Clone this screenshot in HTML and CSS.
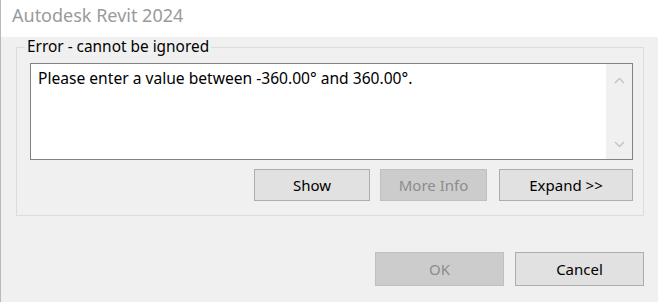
FILE: index.html
```html
<!DOCTYPE html>
<html>
<head>
<meta charset="utf-8">
<link rel="stylesheet" href="styles.css">
</head>
<body>
<div class="window">
  <div class="titlebar">Autodesk Revit 2024</div>
  <div class="content">
    <fieldset class="group">
      <legend class="legend">Error - cannot be ignored</legend>
      <div class="textbox">
        <div class="message">Please enter a value between -360.00° and 360.00°.</div>
        <div class="scrollbar">
          <svg class="chev" width="11" height="7" viewBox="0 0 11 7"><path d="M1 6 L5.5 1.5 L10 6" fill="none" stroke="#c2c2c2" stroke-width="1.3"/></svg>
          <svg class="chev" width="11" height="7" viewBox="0 0 11 7"><path d="M1 1 L5.5 5.5 L10 1" fill="none" stroke="#c2c2c2" stroke-width="1.3"/></svg>
        </div>
      </div>
      <div class="row group-buttons">
        <button class="btn btn-show">Show</button>
        <button class="btn btn-more disabled">More Info</button>
        <button class="btn btn-expand">Expand &gt;&gt;</button>
      </div>
    </fieldset>
    <div class="row dialog-buttons">
      <button class="btn btn-dlg disabled">OK</button>
      <button class="btn btn-dlg">Cancel</button>
    </div>
  </div>
</div>
</body>
</html>
```

FILE: styles.css
```css
html, body {
  margin: 0;
  padding: 0;
}
body {
  width: 658px;
  height: 302px;
  overflow: hidden;
  background: #f0f0f0;
  font-family: "Noto Sans", "Open Sans", sans-serif;
  font-size: 14px;
  color: #000;
}
.window {
  height: 302px;
  border-left: 1px solid #b9b9b9;
  box-sizing: border-box;
  display: flex;
  flex-direction: column;
}
.titlebar {
  height: 37px;
  background: #fff;
  color: #9a9a9a;
  font-size: 18px;
  line-height: 30px;
  padding-left: 11px;
  box-sizing: border-box;
}
.content {
  padding: 0 14px 0 15px;
}
.group {
  margin: 0;
  border: 1px solid #dcdcdc;
  padding: 6px 10px 14px 13px;
  min-width: 0;
}
.legend {
  padding: 0 2px;
  margin-left: -5px;
  line-height: 20px;
  font-size: 15.4px;
}
.textbox {
  height: 97px;
  border: 1px solid #828282;
  background: #fff;
  box-sizing: border-box;
  display: flex;
}
.message {
  flex: 1;
  padding: 4px 7px;
  line-height: 20px;
  font-size: 15.6px;
}
.scrollbar {
  width: 26px;
  background: #f0f0f0;
  display: flex;
  flex-direction: column;
  justify-content: space-between;
  align-items: center;
  padding: 13px 0 11px;
}
.chev {
  display: block;
}
.row {
  display: flex;
  justify-content: flex-end;
}
.group-buttons {
  margin-top: 9px;
}
.btn {
  font-family: inherit;
  font-size: 15px;
  height: 32px;
  background: #e1e1e1;
  border: 1px solid #adadad;
  color: #000;
  padding: 0;
  margin: 0;
}
.btn.disabled {
  background: #cccccc;
  border-color: #bfbfbf;
  color: #8d8d8d;
}
.btn-show { width: 116px; margin-right: 10px; }
.btn-more { width: 107px; margin-right: 12px; }
.btn-expand { width: 134px; }
.dialog-buttons {
  margin-top: 36px;
  gap: 11px;
}
.btn-dlg {
  width: 129px;
  height: 34px;
}
```
